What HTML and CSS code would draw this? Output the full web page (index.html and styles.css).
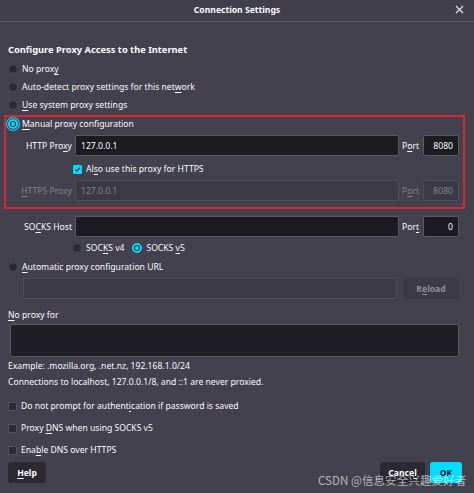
FILE: index.html
```html
<!DOCTYPE html>
<html lang="en">
<head>
<meta charset="utf-8">
<title>Connection Settings</title>
<link rel="stylesheet" href="styles.css">
</head>
<body>
<div class="window">
  <header class="titlebar">
    <span></span>
    <span class="title">Connection Settings</span>
    <span class="close">
      <svg width="9" height="9" viewBox="0 0 9 9"><path d="M1 1L8 8M8 1L1 8" stroke="#e8e8ee" stroke-width="1.1" fill="none"/></svg>
    </span>
  </header>

  <main class="main">
    <h1 class="heading">Configure Proxy Access to the Internet</h1>

    <label class="row radio-row"><span class="radio"></span><span>No prox<u>y</u></span></label>
    <label class="row radio-row"><span class="radio"></span><span>Auto-detect proxy settings for this net<u>w</u>ork</span></label>
    <label class="row radio-row"><span class="radio"></span><span><u>U</u>se system proxy settings</span></label>
    <label class="row radio-row manual"><span class="radio checked focus"></span><span><u>M</u>anual proxy configuration</span></label>

    <div class="proxy-grid http-row">
      <span class="lbl">HTTP Pro<u>x</u>y</span>
      <div class="input">127.0.0.1</div>
      <span class="port-lbl">P<u>o</u>rt</span>
      <div class="input port">8080</div>
    </div>

    <label class="row check-row also"><span class="checkbox checked"><svg width="9" height="9" viewBox="0 0 9 9"><path d="M1.6 4.6L3.7 6.7L7.6 2.2" stroke="#2b2a33" stroke-width="1.4" fill="none"/></svg></span><span>Al<u>s</u>o use this proxy for HTTPS</span></label>

    <div class="proxy-grid https-row disabled">
      <span class="lbl"><u>H</u>TTPS Proxy</span>
      <div class="input dis">127.0.0.1</div>
      <span class="port-lbl">P<u>o</u>rt</span>
      <div class="input port dis">8080</div>
    </div>

    <div class="proxy-grid socks-row">
      <span class="lbl">SO<u>C</u>KS Host</span>
      <div class="input"></div>
      <span class="port-lbl">Por<u>t</u></span>
      <div class="input port">0</div>
    </div>

    <div class="row socks-ver">
      <label class="inline-radio"><span class="radio"></span><span>SOC<u>K</u>S v4</span></label>
      <label class="inline-radio"><span class="radio checked"></span><span>SOCKS <u>v</u>5</span></label>
    </div>

    <label class="row radio-row auto"><span class="radio"></span><span><u>A</u>utomatic proxy configuration URL</span></label>

    <div class="url-row">
      <div class="input dis url"></div>
      <button class="btn reload" disabled>R<u>e</u>load</button>
    </div>

    <div class="noproxy-lbl"><u>N</u>o proxy for</div>
    <div class="textarea"></div>

    <p class="hint">Example: .mozilla.org, .net.nz, 192.168.1.0/24</p>
    <p class="hint">Connections to localhost, 127.0.0.1/8, and ::1 are never proxied.</p>

    <label class="row check-row opt first"><span class="checkbox"></span><span>Do not prompt for authent<u>i</u>cation if password is saved</span></label>
    <label class="row check-row opt"><span class="checkbox"></span><span>Proxy <u>D</u>NS when using SOCKS v5</span></label>
    <label class="row check-row opt"><span class="checkbox"></span><span>Ena<u>b</u>le DNS over HTTPS</span></label>

    <div class="buttons">
      <button class="btn dark"><u>H</u>elp</button>
      <div class="right-btns">
        <button class="btn dark">Cance<u>l</u></button>
        <button class="btn primary">OK</button>
      </div>
    </div>
  </main>

  <div class="annot"></div>
  <div class="watermark">CSDN @信息安全兴趣爱好者</div>
</div>
</body>
</html>
```

FILE: styles.css
```css
* { box-sizing: border-box; }
html, body { margin: 0; padding: 0; }
body {
  width: 474px;
  height: 493px;
  overflow: hidden;
  background: #42414d;
  font-family: "Noto Sans", "Open Sans", sans-serif;
  font-size: 8.6px;
  color: #fbfbfe;
}
u { text-decoration-thickness: 1px; text-underline-offset: 1.5px; }

.window { position: relative; width: 474px; height: 493px; }

.titlebar {
  height: 22px;
  background: #403f4b;
  border-bottom: 1px solid #5a5964;
  display: grid;
  grid-template-columns: 1fr auto 1fr;
  align-items: center;
  padding-bottom: 2px;
}
.title { font-weight: 700; font-size: 8.6px; }
.close { justify-self: end; margin-right: 10px; display: flex; }

.main { padding: 0 15px 0 8px; }

.heading {
  margin: 21px 0 0;
  height: 14px;
  line-height: 14px;
  font-size: 9.3px;
  font-weight: 700;
}

.row { display: flex; align-items: center; }
.radio-row { height: 18px; gap: 4px; }
.heading + .radio-row { margin-top: 3px; }
.manual { margin-top: 1px; }

.radio {
  width: 10px; height: 10px;
  border-radius: 50%;
  background: #2b2a33;
  border: 1px solid #4d4c57;
  flex: none;
  position: relative;
}
.radio.checked {
  border: 2px solid #00ddff;
  background: #2b2a33;
}
.radio.checked::after {
  content: "";
  position: absolute;
  left: 1px; top: 1px;
  width: 4px; height: 4px;
  border-radius: 50%;
  background: #00ddff;
}
.radio.focus {
  box-shadow: 0 0 0 1px #42414d, 0 0 0 2px #00ddff;
}

.proxy-grid {
  display: grid;
  grid-template-columns: 64px 1fr 17px 37px;
  column-gap: 3px;
  align-items: center;
  height: 21px;
}
.lbl { text-align: right; }
.http-row { margin-top: 2px; }
.socks-row { margin-top: 15px; }
.disabled .lbl, .disabled .port-lbl { color: #84838e; }

.input {
  height: 21px;
  background: #1c1b22;
  border: 1px solid #5b5a64;
  border-radius: 2px;
  display: flex;
  align-items: center;
  padding: 0 5px;
  color: #fbfbfe;
}
.input.port { justify-content: flex-end; margin-left: 1px; }
.input.dis {
  background: #3a3944;
  border-color: #4f4e58;
  color: #84838e;
}

.check-row { gap: 4px; }
.also { height: 22px; margin-top: 2px; padding-left: 65px; }
.checkbox {
  width: 9px; height: 9px;
  border-radius: 1px;
  background: #2b2a33;
  border: 1px solid #55545e;
  flex: none;
  display: flex;
  align-items: center;
  justify-content: center;
}
.checkbox svg { display: block; }
.checkbox.checked { background: #00ddff; border-color: #00ddff; }

.socks-ver { height: 18px; margin-top: 2px; padding-left: 64px; gap: 8px; }
.inline-radio { display: flex; align-items: center; gap: 4px; }

.auto { margin-top: 1px; }

.url-row {
  display: flex;
  gap: 6px;
  margin-top: 2px;
  padding-left: 15px;
  height: 21px;
}
.url { flex: 1; }

.btn {
  font-family: inherit;
  font-size: 8.6px;
  font-weight: 700;
  border: none;
  border-radius: 3px;
  height: 21px;
  padding: 0 10px;
  color: #fbfbfe;
}
.reload { width: 56px; background: #3b3a45; color: #8f8e99; }

.noproxy-lbl { margin-top: 9px; height: 14px; line-height: 14px; }
.textarea {
  margin-top: 2px;
  margin-left: 2px;
  height: 33px;
  background: #1f1e25;
  border: 1px solid #5b5a64;
  border-radius: 2px;
}

.hint { margin: 2px 0 0; height: 14px; line-height: 14px; }

.opt { height: 22px; }
.opt.first { margin-top: 6px; }

.buttons {
  display: flex;
  justify-content: space-between;
  height: 21px;
  margin-top: 1px;
}
.right-btns { display: flex; gap: 5px; margin-right: -3px; }
.btn.dark { background: #2b2a33; }
.buttons > .btn.dark { width: 38px; padding: 0; }
.right-btns .btn.dark { width: 45px; padding: 0; }
.btn.primary { background: #00ddff; color: #15141a; width: 32px; padding: 0; }

.annot {
  position: absolute;
  left: 4px; top: 115px;
  width: 461px; height: 94px;
  border: 2px solid #d42a2c;
  pointer-events: none;
}

.watermark {
  position: absolute;
  left: 318px; top: 472px;
  font-family: "Noto Sans CJK SC", "Noto Sans", sans-serif;
  font-size: 11.6px;
  line-height: 17px;
  color: rgba(255, 255, 255, 0.62);
  white-space: nowrap;
  pointer-events: none;
}
```
